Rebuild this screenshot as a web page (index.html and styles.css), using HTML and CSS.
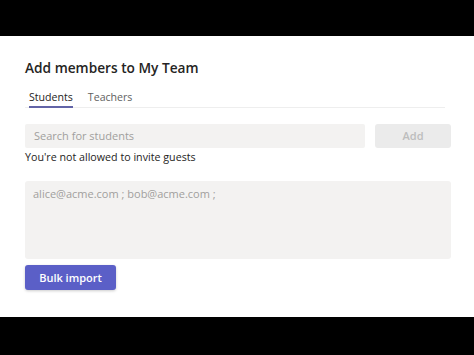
FILE: index.html
```html
<!DOCTYPE html>
<html>
<head>
<meta charset="utf-8">
<link rel="stylesheet" href="styles.css">
</head>
<body>
<div class="frame">
  <div class="dialog">
    <h1 class="title">Add members to My Team</h1>
    <div class="tabs">
      <span class="tab active">Students</span>
      <span class="tab">Teachers</span>
    </div>
    <div class="search-row">
      <div class="search">Search for students</div>
      <div class="add">Add</div>
    </div>
    <div class="note">You're not allowed to invite guests</div>
    <div class="area">alice@acme.com ; bob@acme.com ;</div>
    <div class="bulk">Bulk import</div>
  </div>
</div>
</body>
</html>
```
FILE: styles.css
```css
html, body {
  margin: 0;
  padding: 0;
  background: #000;
}
.frame {
  width: 474px;
  height: 355px;
  padding-top: 36px;
  box-sizing: border-box;
}
.dialog {
  background: #fff;
  height: 281px;
  box-sizing: border-box;
  padding: 22px 23px 0 25px;
  font-family: "Open Sans", "Noto Sans", sans-serif;
  color: #252423;
}
.title {
  margin: 0;
  font-size: 13.7px;
  font-weight: 600;
  line-height: 20px;
}
.tabs {
  display: flex;
  gap: 15px;
  margin-top: 12px;
  padding-left: 4px;
  border-bottom: 1px solid #eeeeee;
  margin-right: 6px;
}
.tab {
  font-size: 10.6px;
  line-height: 14px;
  padding-bottom: 2px;
  color: #616161;
  border-bottom: 2px solid transparent;
  margin-bottom: -1px;
}
.tab.active {
  color: #252423;
  border-bottom-color: #6264a7;
}
.search-row {
  display: flex;
  gap: 10px;
  margin-top: 16px;
}
.search {
  flex: 1;
  height: 24px;
  background: #f3f2f1;
  border-radius: 2px;
  font-size: 11px;
  line-height: 24px;
  color: #a19f9d;
  padding-left: 9px;
}
.add {
  width: 76px;
  height: 24px;
  background: #ebebeb;
  border-radius: 3px;
  font-size: 11px;
  font-weight: 600;
  line-height: 24px;
  text-align: center;
  color: #bdbdbd;
}
.note {
  font-size: 10.7px;
  line-height: 15px;
  margin-top: 2px;
  color: #252423;
}
.area {
  margin-top: 16px;
  height: 78px;
  background: #f3f2f1;
  border-radius: 3px;
  font-size: 11px;
  color: #a19f9d;
  padding: 5px 8px;
  box-sizing: border-box;
  line-height: 15px;
}
.bulk {
  margin-top: 6px;
  width: 91px;
  height: 25px;
  background: #5b5fc7;
  border-radius: 3px;
  color: #fff;
  font-size: 11px;
  font-weight: 600;
  line-height: 25px;
  text-align: center;
  box-shadow: 0 1px 3px rgba(0,0,0,0.2);
}
```
